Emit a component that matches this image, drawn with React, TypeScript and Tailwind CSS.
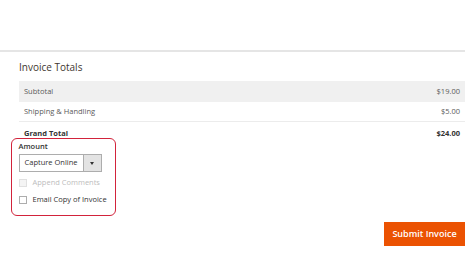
export default function App() {
  return (
    <div className="h-[273px] w-[474px] overflow-hidden bg-white pr-[9px] font-['Open_Sans',sans-serif] text-[#333]">
      <div className="mt-[50px] h-[2px] bg-[#e5e5e5]" />
      <div className="pl-[19px]">
        <h2 className="mt-[8px] text-[10px] leading-[14px] font-medium text-[#41362f]">Invoice Totals</h2>

        <div className="mt-[7px] text-[7.5px] text-[#5a5a5a]">
          <div className="flex h-[21px] items-center justify-between bg-[#f0f0f0] px-[5px]">
            <span>Subtotal</span>
            <span>$19.00</span>
          </div>
          <div className="flex h-[20px] items-center justify-between border-b border-[#ececec] px-[5px]">
            <span>Shipping &amp; Handling</span>
            <span>$5.00</span>
          </div>
          <div className="flex h-[16px] items-start justify-between px-[5px] pt-[6px] leading-[10px] font-bold text-[#333]">
            <span>Grand Total</span>
            <span>$24.00</span>
          </div>
        </div>

        <div className="ml-[-8px] flex items-end justify-between">
          <div className="h-[78px] w-[105px] rounded-[6px] border-[1.5px] border-[#d2233b] pl-[6.5px] pt-[2px]">
            <p className="text-[7.5px] leading-[10px] font-semibold text-[#333]">Amount</p>
            <div className="mt-[3px] flex h-[18px] w-[83px] border border-[#adadad] text-[7.5px]">
              <span className="flex flex-1 items-center pl-[5px] text-[#333]">Capture Online</span>
              <span className="flex w-[18px] items-center justify-center border-l border-[#adadad] bg-[#e3e3e3]">
                <span className="h-0 w-0 border-x-[2.5px] border-t-[3px] border-x-transparent border-t-[#333]" />
              </span>
            </div>
            <label className="mt-[7px] flex h-[8px] items-center gap-[6px] text-[7.5px] text-[#bdbdbd]">
              <span className="h-[8px] w-[8px] border border-[#e0e0e0] bg-[#f4f4f4]" />
              Append Comments
            </label>
            <label className="mt-[9px] flex h-[8px] items-center gap-[6px] text-[7.5px] text-[#333]">
              <span className="h-[8px] w-[8px] border border-[#adadad] bg-white" />
              Email Copy of Invoice
            </label>
          </div>
        </div>

        <div className="mt-[6px] flex justify-end">
          <button className="h-[24px] w-[81px] bg-[#eb5202] text-[9px] font-semibold text-white">
            Submit Invoice
          </button>
        </div>
      </div>
    </div>
  );
}
